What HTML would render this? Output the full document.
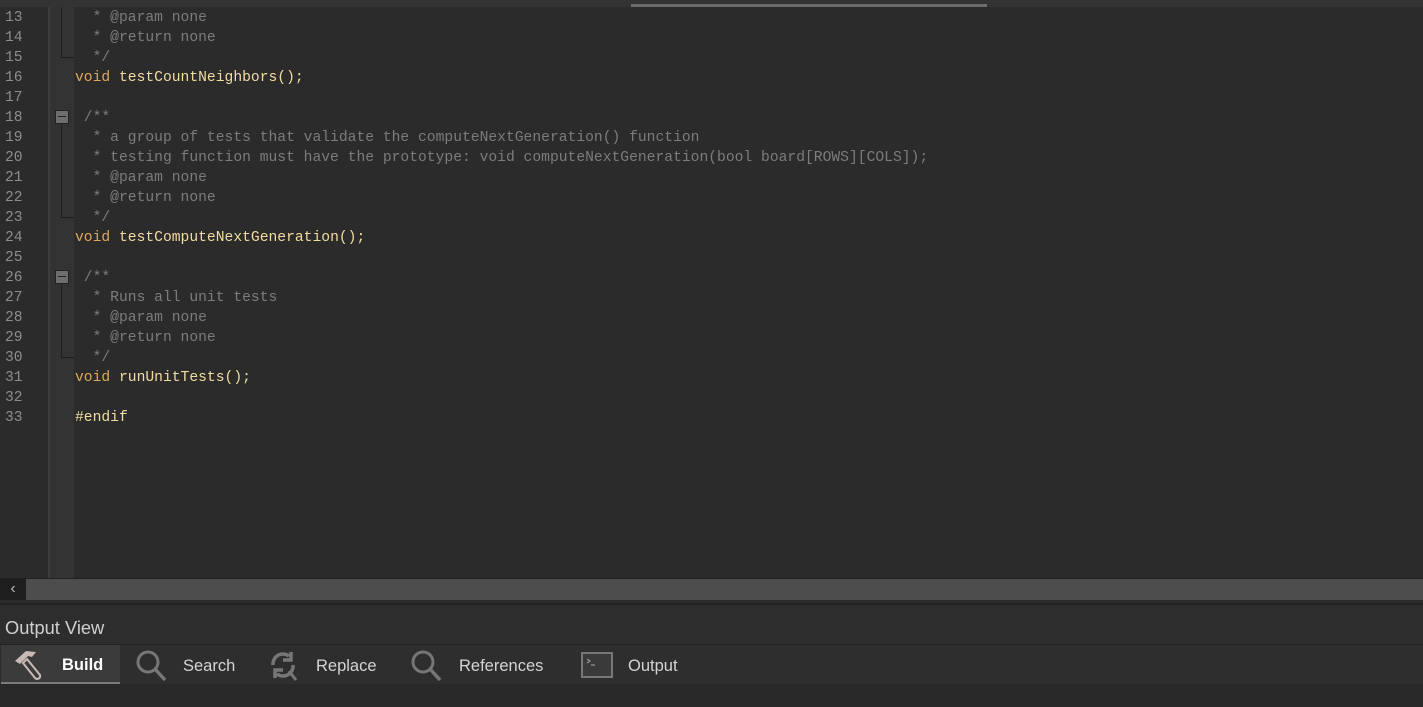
<!DOCTYPE html>
<html><head><style>
*{margin:0;padding:0;box-sizing:border-box}
body{width:1423px;height:707px;background:#2b2b2b;overflow:hidden;position:relative;font-family:"Liberation Sans",sans-serif}
.top{position:absolute;left:0;top:0;width:1423px;height:7px;background:#333}
.thumb{position:absolute;left:631px;top:4px;width:356px;height:3px;background:#6b6b6b}
.gut{position:absolute;left:0;top:7px;width:48px;height:571px;background:#2b2b2b}
.stripe{position:absolute;left:48px;top:7px;width:2px;height:571px;background:#3d3d3d}
.fold{position:absolute;left:50px;top:7px;width:24px;height:571px;background:#333}
.ln{position:absolute;left:5px;font:14.67px/20px "Liberation Mono",monospace;color:#8d8d8d}
.code{position:absolute;left:75px;font:14.67px/20px "Liberation Mono",monospace;color:#d8d8d8;white-space:pre}
.c{color:#7c7c7c}.k{color:#e0a85a}.f{color:#f3dca0}
.fb{position:absolute;left:55px;width:14px;height:14px;background:#6e6e6e;border:1px solid #222}
.fb:after{content:"";position:absolute;left:2px;top:5px;width:8px;height:1px;background:#222}
.fl{position:absolute;left:61px;width:1px;background:#1e1e1e}
.fe{position:absolute;left:61px;width:13px;height:1px;background:#1e1e1e}
.hs{position:absolute;left:0;top:578px;width:1423px;height:22px;background:#4d4d4d;border-top:1px solid #222}
.hb{position:absolute;left:0;top:578px;width:26px;height:22px;background:#1e1e1e;color:#bbb;font-size:16px;line-height:22px;text-align:center}
.pan{position:absolute;left:0;top:603px;width:1423px;height:104px;background:#2d2d2d;border-top:2px solid #222}
.ov{position:absolute;left:5px;top:617px;font-size:18.3px;color:#d0d0d0}
.tabs{position:absolute;left:0;top:644px;width:1423px;height:40px;background:#2e2e2e;border-top:1px solid #222}
.bot{position:absolute;left:0;top:684px;width:1423px;height:23px;background:#282828}
.tab{position:absolute;top:1px;height:40px;line-height:40px;font-size:16.5px;color:#d4d4d4}
.act{left:1px;top:0;width:119px;background:#3b3b3b;border-bottom:3px solid #7a7a7a;font-weight:bold;color:#fff}
svg{position:absolute}
</style></head><body>
<div class="top"><div class="thumb"></div></div>
<div class="gut"></div><div class="stripe"></div><div class="fold"></div>
<div class="ln" style="top:8px">13<br>14<br>15<br>16<br>17<br>18<br>19<br>20<br>21<br>22<br>23<br>24<br>25<br>26<br>27<br>28<br>29<br>30<br>31<br>32<br>33</div>
<div class="fl" style="top:7px;height:50px"></div><div class="fe" style="top:57px"></div>
<div class="fb" style="top:110px"></div><div class="fl" style="top:124px;height:93px"></div><div class="fe" style="top:217px"></div>
<div class="fb" style="top:270px"></div><div class="fl" style="top:284px;height:73px"></div><div class="fe" style="top:357px"></div>
<div class="code" style="top:8px"><span class="c">  * @param none
  * @return none
  */</span>
<span class="k">void</span> <span class="f">testCountNeighbors();</span>

<span class="c"> /**
  * a group of tests that validate the computeNextGeneration() function
  * testing function must have the prototype: void computeNextGeneration(bool board[ROWS][COLS]);
  * @param none
  * @return none
  */</span>
<span class="k">void</span> <span class="f">testComputeNextGeneration();</span>

<span class="c"> /**
  * Runs all unit tests
  * @param none
  * @return none
  */</span>
<span class="k">void</span> <span class="f">runUnitTests();</span>

<span class="f">#endif</span></div>
<div class="hs"></div><div class="hb">&#8249;</div>
<div class="pan"></div>
<div class="ov">Output View</div>
<div class="tabs">
<div class="tab act"><span style="position:absolute;left:61px">Build</span>
<svg style="left:12px;top:3px" width="36" height="34" viewBox="0 0 36 34"><path d="M2 13 L13 3 L23 4 L19 9 L15 8 L7 16 Z" fill="#c8bab4"/><path d="M14 11 L27 27 a3 3 0 0 1 -5 3 L10 15 Z" fill="none" stroke="#c8bab4" stroke-width="2"/></svg></div>
<svg style="left:135px;top:4px" width="36" height="34" viewBox="0 0 36 34"><circle cx="13" cy="13" r="10" fill="none" stroke="#777" stroke-width="3"/><path d="M20 20 L30 31" stroke="#777" stroke-width="3.5"/></svg>
<div class="tab" style="left:183px">Search</div>
<svg style="left:267px;top:4px" width="36" height="34" viewBox="0 0 36 34"><path d="M6 16 A10 10 0 0 1 22 7 M24 3 L24 11 L16 11" fill="none" stroke="#777" stroke-width="3.5"/><path d="M26 16 A10 10 0 0 1 10 25 M8 29 L8 21 L16 21" fill="none" stroke="#777" stroke-width="3.5"/><path d="M22 22 L29 31" stroke="#777" stroke-width="3"/></svg>
<div class="tab" style="left:316px">Replace</div>
<svg style="left:410px;top:4px" width="36" height="34" viewBox="0 0 36 34"><circle cx="13" cy="13" r="10" fill="none" stroke="#777" stroke-width="3"/><path d="M20 20 L30 31" stroke="#777" stroke-width="3.5"/></svg>
<div class="tab" style="left:459px">References</div>
<svg style="left:581px;top:7px" width="32" height="26" viewBox="0 0 32 26"><rect x="1" y="1" width="30" height="24" fill="#3a3a3a" stroke="#777" stroke-width="2"/><path d="M6 7 L9 9 L6 11 M10 13 H14" stroke="#aaa" stroke-width="1" fill="none"/></svg>
<div class="tab" style="left:628px">Output</div>
</div>
<div class="bot"></div>
</body></html>
